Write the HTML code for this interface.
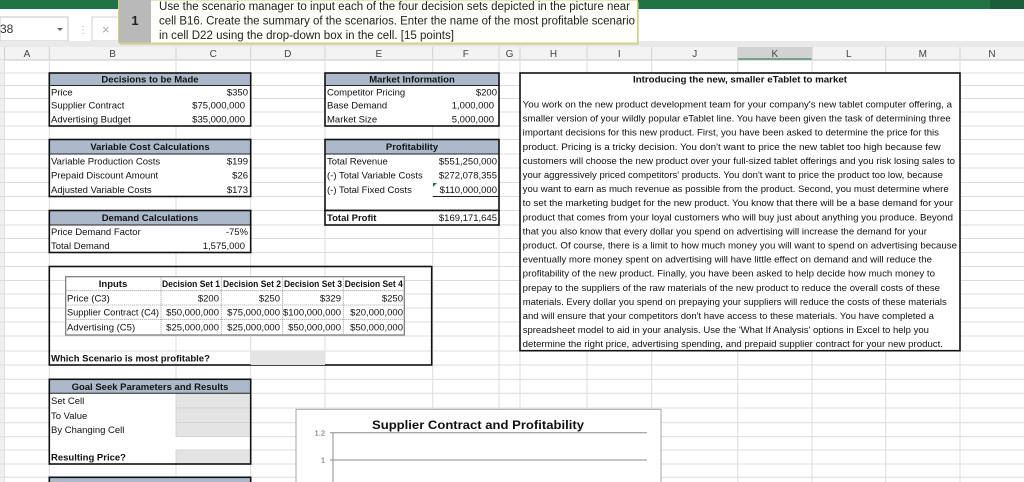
<!DOCTYPE html>
<html><head><meta charset="utf-8">
<style>
html,body{margin:0;padding:0;background:#fff;width:1024px;height:482px;overflow:hidden}
svg{display:block}
text{font-family:"Liberation Sans",Arial,sans-serif;fill:#111}
.c{font-size:9.5px}
.b{font-weight:bold}
.m{text-anchor:middle}
.r{text-anchor:end}
.h{font-size:10px;fill:#444}
</style></head><body>
<svg width="1024" height="482" viewBox="0 0 1024 482" xmlns="http://www.w3.org/2000/svg">
<!-- top chrome -->
<rect x="0" y="0" width="1024" height="9" fill="#217346"/>
<rect x="990" y="0" width="34" height="9" fill="#1b5e38"/>
<rect x="0" y="9" width="1024" height="32" fill="#fff"/>
<rect x="0" y="17" width="68" height="24" fill="#fff" stroke="#c6c6c6"/>
<text x="0" y="33" style="font-size:12px;fill:#333">38</text>
<path d="M57 28 L63 28 L60 31 Z" fill="#666"/>
<text x="78" y="33" style="font-size:10px;fill:#aaa">⋮</text>
<rect x="92" y="17" width="30" height="24" fill="#fff" stroke="#d0d0d0"/>
<text x="102" y="34" style="font-size:13px;fill:#aaa">×</text>
<rect x="0" y="41" width="1024" height="6" fill="#e9e9e9"/>
<!-- column headers -->
<rect x="0" y="47" width="1024" height="13" fill="#f3f3f3"/>
<rect x="737.7" y="47" width="74.3" height="13" fill="#d2d2d2"/>
<rect x="737.7" y="58.5" width="74.3" height="1.5" fill="#217346"/>
<line x1="0" y1="60" x2="1024" y2="60" stroke="#c6c6c6"/>
<g stroke="#d0d0d0">
<line x1="4.5" y1="47" x2="4.5" y2="482"/>
<line x1="49.3" y1="47" x2="49.3" y2="60"/><line x1="176" y1="47" x2="176" y2="60"/><line x1="250.7" y1="47" x2="250.7" y2="60"/><line x1="325" y1="47" x2="325" y2="60"/><line x1="432.7" y1="47" x2="432.7" y2="60"/><line x1="499" y1="47" x2="499" y2="60"/><line x1="520" y1="47" x2="520" y2="60"/><line x1="587" y1="47" x2="587" y2="60"/><line x1="651.7" y1="47" x2="651.7" y2="60"/><line x1="737.7" y1="47" x2="737.7" y2="60"/><line x1="812" y1="47" x2="812" y2="60"/><line x1="885.7" y1="47" x2="885.7" y2="60"/><line x1="960" y1="47" x2="960" y2="60"/>
</g>
<rect x="0" y="60" width="4.5" height="422" fill="#f0f0f0"/>
<g class="h">
<text class="h m" x="27" y="57">A</text><text class="h m" x="112.6" y="57">B</text><text class="h m" x="213.3" y="57">C</text><text class="h m" x="287.8" y="57">D</text><text class="h m" x="378.8" y="57">E</text><text class="h m" x="465.8" y="57">F</text><text class="h m" x="509.5" y="57">G</text><text class="h m" x="553.5" y="57">H</text><text class="h m" x="619.3" y="57">I</text><text class="h m" x="694.7" y="57">J</text><text class="h m" x="774.8" y="57">K</text><text class="h m" x="848.8" y="57">L</text><text class="h m" x="922.8" y="57">M</text><text class="h m" x="992" y="57">N</text>
</g>
<!-- grid -->
<g stroke="#dcdcdc" stroke-width="1">
<line x1="49.3" y1="60" x2="49.3" y2="482"/><line x1="176" y1="60" x2="176" y2="482"/><line x1="250.7" y1="60" x2="250.7" y2="482"/><line x1="325" y1="60" x2="325" y2="482"/><line x1="432.7" y1="60" x2="432.7" y2="482"/><line x1="499" y1="60" x2="499" y2="482"/><line x1="520" y1="60" x2="520" y2="482"/><line x1="587" y1="60" x2="587" y2="482"/><line x1="651.7" y1="60" x2="651.7" y2="482"/><line x1="737.7" y1="60" x2="737.7" y2="482"/><line x1="812" y1="60" x2="812" y2="482"/><line x1="885.7" y1="60" x2="885.7" y2="482"/><line x1="960" y1="60" x2="960" y2="482"/>
<line x1="0" y1="73" x2="1024" y2="73"/><line x1="0" y1="85.5" x2="1024" y2="85.5"/><line x1="0" y1="98.5" x2="1024" y2="98.5"/><line x1="0" y1="112" x2="1024" y2="112"/><line x1="0" y1="126" x2="1024" y2="126"/><line x1="0" y1="139.5" x2="1024" y2="139.5"/><line x1="0" y1="154" x2="1024" y2="154"/><line x1="0" y1="168" x2="1024" y2="168"/><line x1="0" y1="182.5" x2="1024" y2="182.5"/><line x1="0" y1="196.5" x2="1024" y2="196.5"/><line x1="0" y1="210.5" x2="1024" y2="210.5"/><line x1="0" y1="225" x2="1024" y2="225"/><line x1="0" y1="238.5" x2="1024" y2="238.5"/><line x1="0" y1="252.5" x2="1024" y2="252.5"/><line x1="0" y1="266.5" x2="1024" y2="266.5"/><line x1="0" y1="280.5" x2="1024" y2="280.5"/><line x1="0" y1="294" x2="1024" y2="294"/><line x1="0" y1="308" x2="1024" y2="308"/><line x1="0" y1="322" x2="1024" y2="322"/><line x1="0" y1="336" x2="1024" y2="336"/><line x1="0" y1="351" x2="1024" y2="351"/><line x1="0" y1="365" x2="1024" y2="365"/><line x1="0" y1="379.3" x2="1024" y2="379.3"/><line x1="0" y1="393.3" x2="1024" y2="393.3"/><line x1="0" y1="408" x2="1024" y2="408"/><line x1="0" y1="422.7" x2="1024" y2="422.7"/><line x1="0" y1="436.7" x2="1024" y2="436.7"/><line x1="0" y1="450" x2="1024" y2="450"/><line x1="0" y1="464" x2="1024" y2="464"/><line x1="0" y1="477.3" x2="1024" y2="477.3"/>
</g>

<!-- Decisions -->
<rect x="49.3" y="73" width="201.4" height="12.5" fill="#acb9ca"/>
<rect x="49.3" y="85.5" width="201.4" height="40.5" fill="#fff"/>
<line x1="49.3" y1="85.5" x2="250.7" y2="85.5" stroke="#222"/>
<rect x="49.3" y="73" width="201.4" height="53" fill="none" stroke="#111" stroke-width="1.6"/>
<text class="c b m" x="150" y="82.3">Decisions to be Made</text>
<text class="c" x="51" y="95.3">Price</text><text class="c r" x="248" y="95.3">$350</text>
<text class="c" x="51" y="108.7">Supplier Contract</text><text class="c r" x="245" y="108.7">$75,000,000</text>
<text class="c" x="51" y="122.4">Advertising Budget</text><text class="c r" x="245" y="122.4">$35,000,000</text>

<!-- Variable -->
<rect x="49.3" y="139.5" width="201.4" height="14.5" fill="#acb9ca"/>
<rect x="49.3" y="154" width="201.4" height="42.5" fill="#fff"/>
<line x1="49.3" y1="154" x2="250.7" y2="154" stroke="#222"/>
<rect x="49.3" y="139.5" width="201.4" height="57" fill="none" stroke="#111" stroke-width="1.6"/>
<text class="c b m" x="150" y="150">Variable Cost Calculations</text>
<text class="c" x="51" y="164.4">Variable Production Costs</text><text class="c r" x="248" y="164.4">$199</text>
<text class="c" x="51" y="178.6">Prepaid Discount Amount</text><text class="c r" x="248" y="178.6">$26</text>
<text class="c" x="51" y="192.8">Adjusted Variable Costs</text><text class="c r" x="248" y="192.8">$173</text>

<!-- Demand -->
<rect x="49.3" y="210.5" width="201.4" height="14.5" fill="#acb9ca"/>
<rect x="49.3" y="225" width="201.4" height="27.5" fill="#fff"/>
<line x1="49.3" y1="225" x2="250.7" y2="225" stroke="#222"/>
<rect x="49.3" y="210.5" width="201.4" height="42" fill="none" stroke="#111" stroke-width="1.6"/>
<text class="c b m" x="150" y="221">Demand Calculations</text>
<text class="c" x="51" y="235">Price Demand Factor</text><text class="c r" x="248" y="235">-75%</text>
<text class="c" x="51" y="249">Total Demand</text><text class="c r" x="245" y="249">1,575,000</text>

<!-- Market -->
<rect x="325" y="73" width="174" height="12.5" fill="#acb9ca"/>
<rect x="325" y="85.5" width="174" height="40.5" fill="#fff"/>
<line x1="325" y1="85.5" x2="499" y2="85.5" stroke="#222"/>
<rect x="325" y="73" width="174" height="53" fill="none" stroke="#111" stroke-width="1.6"/>
<text class="c b m" x="412" y="82.3">Market Information</text>
<text class="c" x="327" y="95.3">Competitor Pricing</text><text class="c r" x="497" y="95.3">$200</text>
<text class="c" x="327" y="108.7">Base Demand</text><text class="c r" x="494" y="108.7">1,000,000</text>
<text class="c" x="327" y="122.4">Market Size</text><text class="c r" x="494" y="122.4">5,000,000</text>

<!-- Profitability -->
<rect x="325" y="139.5" width="174" height="14.5" fill="#acb9ca"/>
<rect x="325" y="154" width="174" height="56.5" fill="#fff"/>
<line x1="325" y1="154" x2="499" y2="154" stroke="#222"/>
<line x1="432.7" y1="196.5" x2="499" y2="196.5" stroke="#222"/>
<rect x="325" y="139.5" width="174" height="71" fill="none" stroke="#111" stroke-width="1.6"/>
<text class="c b m" x="412" y="150">Profitability</text>
<text class="c" x="327" y="164.4">Total Revenue</text><text class="c r" x="497" y="164.4">$551,250,000</text>
<text class="c" x="327" y="178.6">(-) Total Variable Costs</text><text class="c r" x="497" y="178.6">$272,078,355</text>
<text class="c" x="327" y="192.8">(-) Total Fixed Costs</text><text class="c r" x="497" y="192.8">$110,000,000</text>
<path d="M433 183 L437 183 L433 187 Z" fill="#1e7a3a"/>
<rect x="325" y="210.5" width="174" height="14.5" fill="#fff" stroke="#111" stroke-width="1.6"/>
<text class="c b" x="327" y="221">Total Profit</text><text class="c r" x="497" y="221">$169,171,645</text>

<!-- Scenario box -->
<rect x="49.3" y="266.5" width="382.4" height="98.5" fill="none" stroke="#111" stroke-width="1.6"/>
<rect x="250.7" y="351" width="74.3" height="14" fill="#e4e4e4"/>
<rect x="65.7" y="276.7" width="338.6" height="58.3" fill="#fff" stroke="#777" stroke-width="1.2"/>
<g stroke="#888" stroke-dasharray="1,1" stroke-width="0.8">
<line x1="65.7" y1="290.7" x2="404.3" y2="290.7"/><line x1="65.7" y1="305" x2="404.3" y2="305"/><line x1="65.7" y1="319.3" x2="404.3" y2="319.3"/>
<line x1="161" y1="276.7" x2="161" y2="335"/><line x1="221.3" y1="276.7" x2="221.3" y2="335"/><line x1="282.7" y1="276.7" x2="282.7" y2="335"/><line x1="343.3" y1="276.7" x2="343.3" y2="335"/>
</g>
<g class="c">
<text class="c b m" x="113" y="287">Inputs</text>
<text class="c b m" x="191" y="287" textLength="58" lengthAdjust="spacingAndGlyphs">Decision Set 1</text>
<text class="c b m" x="252" y="287" textLength="58" lengthAdjust="spacingAndGlyphs">Decision Set 2</text>
<text class="c b m" x="313" y="287" textLength="58" lengthAdjust="spacingAndGlyphs">Decision Set 3</text>
<text class="c b m" x="373.8" y="287" textLength="58" lengthAdjust="spacingAndGlyphs">Decision Set 4</text>
<text class="c" x="67" y="301.3">Price (C3)</text>
<text class="c r" x="219" y="301.3">$200</text><text class="c r" x="280" y="301.3">$250</text><text class="c r" x="341" y="301.3">$329</text><text class="c r" x="403" y="301.3">$250</text>
<text class="c" x="67" y="315.6" textLength="92" lengthAdjust="spacingAndGlyphs">Supplier Contract (C4)</text>
<text class="c r" x="219" y="315.6">$50,000,000</text><text class="c r" x="280" y="315.6">$75,000,000</text><text class="c r" x="341" y="315.6" textLength="58" lengthAdjust="spacingAndGlyphs">$100,000,000</text><text class="c r" x="403" y="315.6">$20,000,000</text>
<text class="c" x="67" y="330.5">Advertising (C5)</text>
<text class="c r" x="219" y="330.5">$25,000,000</text><text class="c r" x="280" y="330.5">$25,000,000</text><text class="c r" x="341" y="330.5">$50,000,000</text><text class="c r" x="403" y="330.5">$50,000,000</text>
</g>
<text class="c b" x="51" y="361.5">Which Scenario is most profitable?</text>

<!-- Goal Seek -->
<rect x="49.3" y="379.3" width="201.4" height="14" fill="#acb9ca"/>
<rect x="49.3" y="393.3" width="201.4" height="70.7" fill="#fff"/>
<g fill="#e4e4e4" stroke="#cfcfcf" stroke-width="0.8">
<rect x="176" y="393.3" width="74.7" height="14.7"/><rect x="176" y="408" width="74.7" height="14.7"/><rect x="176" y="422.7" width="74.7" height="14"/><rect x="176" y="450" width="74.7" height="14"/>
</g>
<line x1="49.3" y1="393.3" x2="250.7" y2="393.3" stroke="#222"/>
<rect x="49.3" y="379.3" width="201.4" height="84.7" fill="none" stroke="#111" stroke-width="1.6"/>
<text class="c b m" x="150" y="390">Goal Seek Parameters and Results</text>
<text class="c" x="51" y="404.2">Set Cell</text>
<text class="c" x="51" y="418.8">To Value</text>
<text class="c" x="51" y="433">By Changing Cell</text>
<text class="c b" x="51" y="460.5">Resulting Price?</text>
<rect x="49.3" y="477.3" width="201.4" height="8" fill="#acb9ca" stroke="#111" stroke-width="1.6"/>

<!-- chart -->
<rect x="296" y="409.3" width="365" height="80" fill="#fff" stroke="#a6a6a6"/>
<text class="b m" x="478" y="429" style="font-size:12px" textLength="212" lengthAdjust="spacingAndGlyphs">Supplier Contract and Profitability</text>
<line x1="330" y1="432.7" x2="647" y2="432.7" stroke="#8c8c8c"/>
<line x1="330" y1="460" x2="647" y2="460" stroke="#8c8c8c"/>
<line x1="333" y1="432.7" x2="333" y2="482" stroke="#8c8c8c"/>
<text class="r" x="325" y="435.5" style="font-size:7.5px;fill:#555">1.2</text>
<text class="r" x="325" y="462.5" style="font-size:7.5px;fill:#555">1</text>

<!-- text box -->
<rect x="520" y="73" width="440" height="277.7" fill="#fff" stroke="#111" stroke-width="1.6"/>
<text class="c b m" x="740" y="82.5" textLength="214" lengthAdjust="spacingAndGlyphs">Introducing the new, smaller eTablet to market</text>
<g class="c">
<text class="c" x="522.7" y="107.5" textLength="429.3" lengthAdjust="spacingAndGlyphs">You work on the new product development team for your company's new tablet computer offering, a</text>
<text class="c" x="522.7" y="121.6" textLength="428" lengthAdjust="spacingAndGlyphs">smaller version of your wildly popular eTablet line. You have been given the task of determining three</text>
<text class="c" x="522.7" y="135.7" textLength="416.3" lengthAdjust="spacingAndGlyphs">important decisions for this new product. First, you have been asked to determine the price for this</text>
<text class="c" x="522.7" y="149.8" textLength="418" lengthAdjust="spacingAndGlyphs">product. Pricing is a tricky decision. You don't want to price the new tablet too high because few</text>
<text class="c" x="522.7" y="163.9" textLength="432.3" lengthAdjust="spacingAndGlyphs">customers will choose the new product over your full-sized tablet offerings and you risk losing sales to</text>
<text class="c" x="522.7" y="178" textLength="420.3" lengthAdjust="spacingAndGlyphs">your aggressively priced competitors' products. You don't want to price the product too low, because</text>
<text class="c" x="522.7" y="192.1" textLength="426" lengthAdjust="spacingAndGlyphs">you want to earn as much revenue as possible from the product. Second, you must determine where</text>
<text class="c" x="522.7" y="206.2" textLength="430.3" lengthAdjust="spacingAndGlyphs">to set the marketing budget for the new product. You know that there will be a base demand for your</text>
<text class="c" x="522.7" y="220.3" textLength="430.3" lengthAdjust="spacingAndGlyphs">product that comes from your loyal customers who will buy just about anything you produce. Beyond</text>
<text class="c" x="522.7" y="234.4" textLength="404.3" lengthAdjust="spacingAndGlyphs">that you also know that every dollar you spend on advertising will increase the demand for your</text>
<text class="c" x="522.7" y="248.5" textLength="434.3" lengthAdjust="spacingAndGlyphs">product. Of course, there is a limit to how much money you will want to spend on advertising because</text>
<text class="c" x="522.7" y="262.6" textLength="409.3" lengthAdjust="spacingAndGlyphs">eventually more money spent on advertising will have little effect on demand and will reduce the</text>
<text class="c" x="522.7" y="276.7" textLength="412.3" lengthAdjust="spacingAndGlyphs">profitability of the new product. Finally, you have been asked to help decide how much money to</text>
<text class="c" x="522.7" y="290.8" textLength="417.3" lengthAdjust="spacingAndGlyphs">prepay to the suppliers of the raw materials of the new product to reduce the overall costs of these</text>
<text class="c" x="522.7" y="304.9" textLength="424" lengthAdjust="spacingAndGlyphs">materials. Every dollar you spend on prepaying your suppliers will reduce the costs of these materials</text>
<text class="c" x="522.7" y="319" textLength="411.3" lengthAdjust="spacingAndGlyphs">and will ensure that your competitors don't have access to these materials. You have completed a</text>
<text class="c" x="522.7" y="333.1" textLength="406.3" lengthAdjust="spacingAndGlyphs">spreadsheet model to aid in your analysis. Use the 'What If Analysis' options in Excel to help you</text>
<text class="c" x="522.7" y="347.2" textLength="420.3" lengthAdjust="spacingAndGlyphs">determine the right price, advertising spending, and prepaid supplier contract for your new product.</text>
</g>

<!-- callout -->
<rect x="120" y="2" width="519" height="43" fill="#c9c98a" opacity="0.6"/>
<rect x="118.5" y="0" width="519" height="43" fill="#fffffa" stroke="#d2cf7a" stroke-width="1"/>
<rect x="119" y="0" width="32" height="42.5" fill="#b9b9b9"/>
<text class="b m" x="135" y="25" style="font-size:13px;fill:#222">1</text>
<text x="159" y="10" style="font-size:11.5px;fill:#222" textLength="471" lengthAdjust="spacingAndGlyphs">Use the scenario manager to input each of the four decision sets depicted in the picture near</text>
<text x="159" y="24.5" style="font-size:11.5px;fill:#222" textLength="476" lengthAdjust="spacingAndGlyphs">cell B16. Create the summary of the scenarios. Enter the name of the most profitable scenario</text>
<text x="159" y="39" style="font-size:11.5px;fill:#222" textLength="295" lengthAdjust="spacingAndGlyphs">in cell D22 using the drop-down box in the cell. [15 points]</text>
</svg>
</body></html>
